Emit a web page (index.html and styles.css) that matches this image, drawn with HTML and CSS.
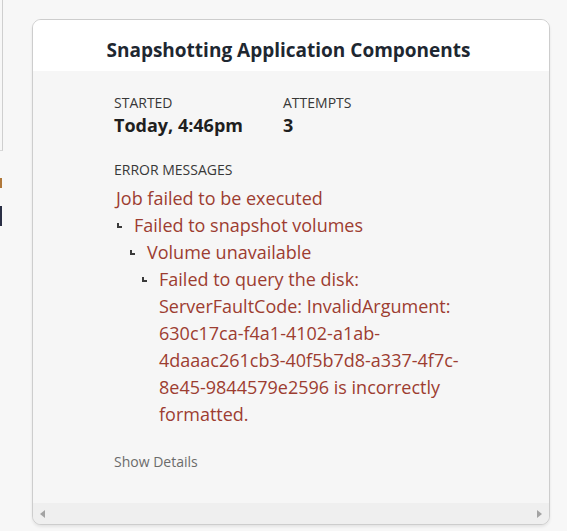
FILE: index.html
```html
<!DOCTYPE html>
<html lang="en">
<head>
<meta charset="utf-8">
<title>Snapshotting Application Components</title>
<link rel="stylesheet" href="styles.css">
</head>
<body>
<div class="page">
  <div class="edge">
    <div class="edge-line"></div>
    <div class="edge-gap"></div>
    <div class="edge-orange"></div>
    <div class="edge-gap2"></div>
    <div class="edge-navy"></div>
  </div>
  <div class="main">
    <section class="card">
      <header class="card-header">
        <h1 class="card-title">Snapshotting Application Components</h1>
      </header>
      <div class="card-body">
        <div class="meta">
          <div class="meta-item">
            <div class="meta-label">STARTED</div>
            <div class="meta-value">Today, 4:46pm</div>
          </div>
          <div class="meta-item">
            <div class="meta-label">ATTEMPTS</div>
            <div class="meta-value">3</div>
          </div>
        </div>
        <div class="section-label">ERROR MESSAGES</div>
        <div class="errors">
          <div class="err d0"><span class="err-text">Job failed to be executed</span></div>
          <div class="err d1"><span class="corner"></span><span class="err-text">Failed to snapshot volumes</span></div>
          <div class="err d2"><span class="corner"></span><span class="err-text">Volume unavailable</span></div>
          <div class="err d3"><span class="corner"></span><span class="err-text">Failed to query the disk: ServerFaultCode: InvalidArgument: 630c17ca-f4a1-4102-a1ab-4daaac261cb3-40f5b7d8-a337-4f7c-8e45-9844579e2596 is incorrectly formatted.</span></div>
        </div>
        <a class="show-details">Show Details</a>
      </div>
      <div class="hscroll">
        <span class="arrow-left"></span>
        <span class="arrow-right"></span>
      </div>
    </section>
  </div>
</div>
</body>
</html>
```

FILE: styles.css
```css
html, body {
  margin: 0;
  padding: 0;
}
body {
  background: #f7f7f7;
  font-family: "Open Sans", "Noto Sans", sans-serif;
  color: #222;
  width: 567px;
  height: 531px;
  overflow: hidden;
}
.page {
  display: flex;
  height: 531px;
}
.edge {
  width: 3px;
  display: flex;
  flex-direction: column;
}
.edge-line {
  height: 150px;
  width: 2px;
  border-right: 1px solid #cfcfcf;
  border-bottom: 1px solid #d8d8d8;
}
.edge-gap { height: 27px; }
.edge-orange {
  height: 10px;
  width: 2px;
  background: #b0783a;
}
.edge-gap2 { height: 18px; }
.edge-navy {
  height: 20px;
  width: 2px;
  background: #2a2f45;
}
.main {
  padding-top: 19px;
  padding-left: 29px;
}
.card {
  width: 518px;
  height: 506px;
  box-sizing: border-box;
  border: 1px solid #cdcdcd;
  border-radius: 9px;
  background: #f6f6f6;
  overflow: hidden;
  display: flex;
  flex-direction: column;
  box-shadow: 0 2px 3px rgba(0,0,0,0.08);
}
.card-header {
  background: #fff;
  height: 51px;
  box-sizing: border-box;
  padding-top: 17px;
}
.card-title {
  margin: 0;
  text-align: center;
  font-size: 19px;
  font-weight: 700;
  line-height: 26px;
  color: #1e2731;
  padding-right: 5px;
}
.card-body {
  flex: 1;
  padding: 22px 81px 0 81px;
}
.meta {
  display: grid;
  grid-template-columns: 169px auto;
}
.meta-label, .section-label {
  font-size: 14px;
  line-height: 19px;
  color: #383838;
}
.meta-value {
  font-size: 18px;
  font-weight: 700;
  line-height: 26px;
  color: #1f1f1f;
}
.section-label {
  margin-top: 22px;
}
.errors {
  margin-top: 6px;
  padding-left: 2px;
  color: #9d3d31;
  font-size: 18px;
  line-height: 27px;
}
.err {
  display: flex;
  align-items: flex-start;
}
.d1 { padding-left: 1px; }
.d2 { padding-left: 14px; }
.d3 { padding-left: 26px; }
.corner {
  flex: none;
  width: 17px;
  height: 27px;
  position: relative;
}
.corner::before {
  content: "";
  position: absolute;
  left: 0;
  top: 11px;
  width: 3px;
  height: 3px;
  border-left: 2px solid #3a3a3a;
  border-bottom: 2px solid #3a3a3a;
}
.err-text {
  flex: 1;
  min-width: 0;
}
.show-details {
  display: block;
  margin-top: 24px;
  font-size: 14px;
  line-height: 20px;
  color: #6b6b6b;
}
.hscroll {
  height: 21px;
  background: #efefef;
  display: flex;
  align-items: center;
  justify-content: space-between;
  padding: 0 7px;
}
.arrow-left, .arrow-right {
  width: 0;
  height: 0;
  border-top: 4px solid transparent;
  border-bottom: 4px solid transparent;
}
.arrow-left { border-right: 5px solid #a3a3a3; }
.arrow-right { border-left: 5px solid #a3a3a3; }
```
